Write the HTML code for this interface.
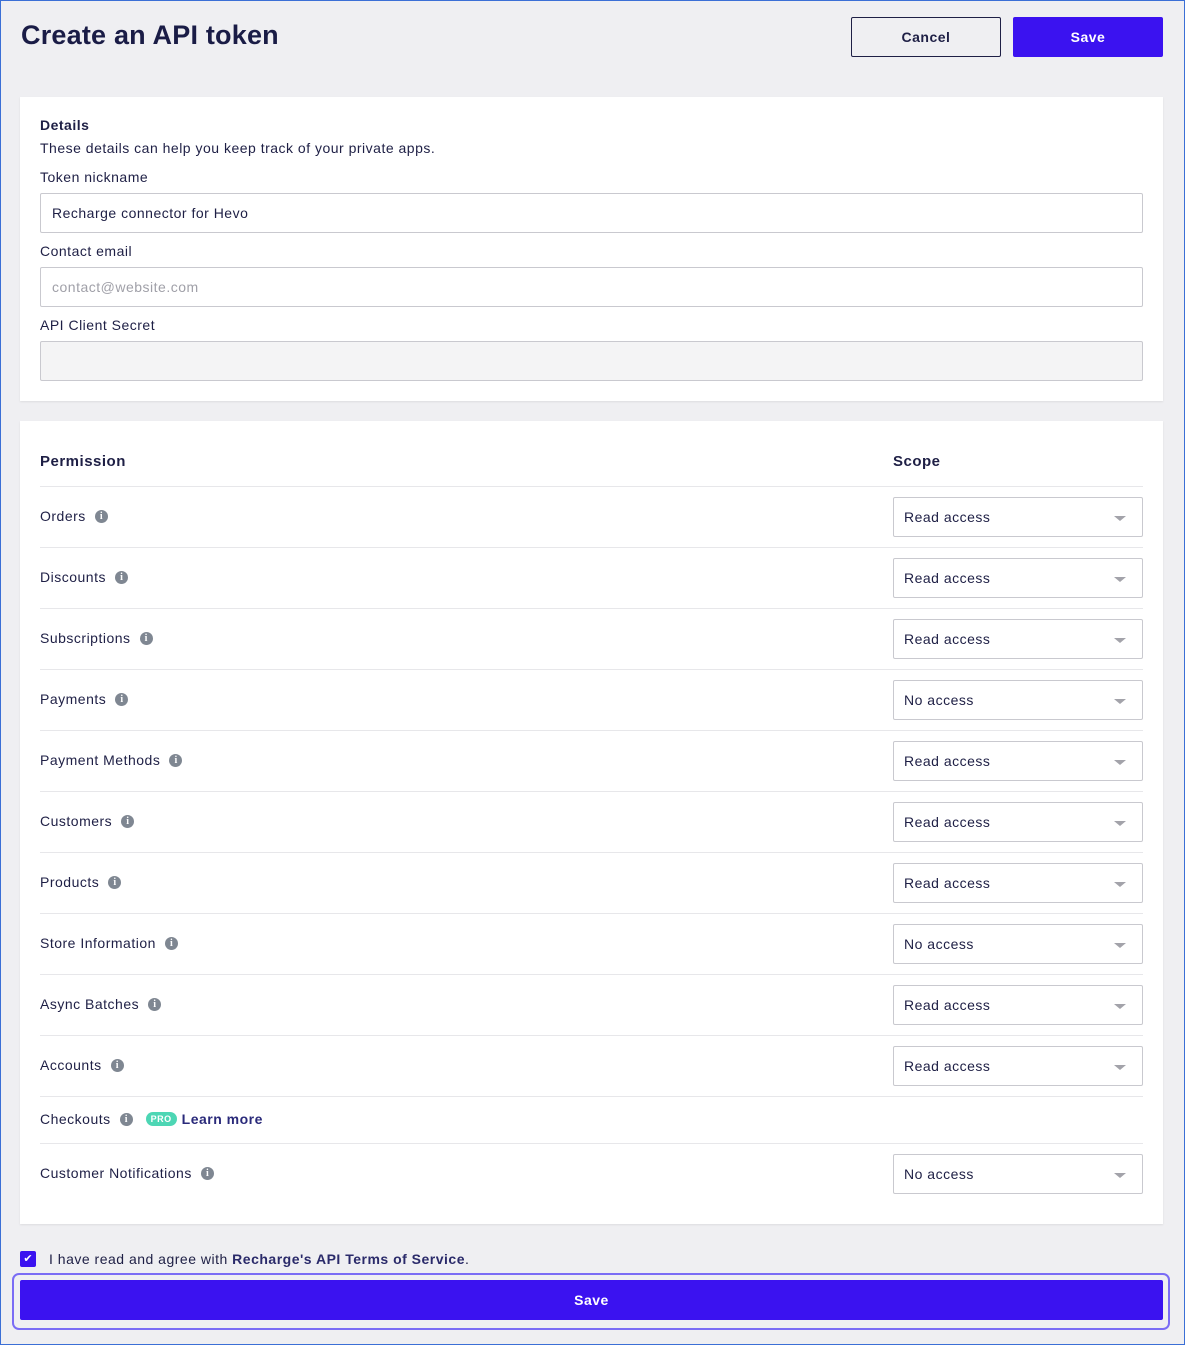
<!DOCTYPE html>
<html><head><meta charset="utf-8"><style>
*{box-sizing:border-box;margin:0;padding:0}
body{width:1185px;height:1345px;background:#efeff2;font-family:"Liberation Sans",sans-serif;color:#1e1f45;position:relative;overflow:hidden;font-size:14px;letter-spacing:0.5px}
.frame{position:absolute;left:0;top:0;width:1185px;height:1345px;border:1px solid #3b6fd6;pointer-events:none}
.abs{position:absolute}
h1{position:absolute;left:21px;top:20px;font-size:27px;font-weight:bold;color:#1a1c46;letter-spacing:0.2px}
.btn{position:absolute;top:17px;height:40px;font-weight:bold;font-size:14px;display:flex;align-items:center;justify-content:center;border-radius:2px}
.card{position:absolute;left:20px;width:1143px;background:#fff;box-shadow:0 1px 2px rgba(0,0,0,.08)}
.lbl{position:absolute;left:40px;font-size:14px;line-height:16px}
.inp{position:absolute;left:40px;width:1103px;height:40px;border:1px solid #c9c9cf;border-radius:2px;padding:0 11px;display:flex;align-items:center;font-size:14px}
.sep{position:absolute;left:40px;width:1103px;height:1px;background:#e7e7ea}
.sel{position:absolute;left:893px;width:250px;height:40px;border:1px solid #c9c9cf;border-radius:2px;padding:0 10px;display:flex;align-items:center}
.sel:after{content:"";position:absolute;right:16px;top:18px;border-left:6px solid transparent;border-right:6px solid transparent;border-top:5px solid #a3a3aa}
.row{position:absolute;left:40px;display:flex;align-items:center;height:20px}
.i{display:inline-block;width:13px;height:13px;border-radius:50%;background:#7f8792;color:#fff;font-size:10px;font-weight:bold;text-align:center;line-height:13px;margin-left:9px;font-family:"Liberation Serif",serif;letter-spacing:0}
</style></head><body>
<h1>Create an API token</h1>
<div class="btn" style="left:851px;width:150px;border:1px solid #1e1f45;color:#1e1f45">Cancel</div>
<div class="btn" style="left:1013px;width:150px;background:#3b12f0;color:#fff">Save</div>

<div class="card" style="top:97px;height:304px"></div>
<div class="lbl" style="top:117px;font-weight:bold">Details</div>
<div class="lbl" style="top:140px">These details can help you keep track of your private apps.</div>
<div class="lbl" style="top:169px">Token nickname</div>
<div class="inp" style="top:193px">Recharge connector for Hevo</div>
<div class="lbl" style="top:243px">Contact email</div>
<div class="inp" style="top:267px;color:#a0a0a8">contact@website.com</div>
<div class="lbl" style="top:317px">API Client Secret</div>
<div class="inp" style="top:341px;background:#f4f4f5"></div>

<div class="card" style="top:421px;height:803px"></div>
<div class="lbl" style="top:454px;font-weight:bold;font-size:15px">Permission</div>
<div class="abs" style="left:893px;top:454px;font-weight:bold;font-size:15px;line-height:16px">Scope</div>

<div class="sep" style="top:486px"></div>
<div class="row" style="top:506px">Orders<span class="i">i</span></div>
<div class="sel" style="top:497px">Read access</div>
<div class="sep" style="top:547px"></div>
<div class="row" style="top:567px">Discounts<span class="i">i</span></div>
<div class="sel" style="top:558px">Read access</div>
<div class="sep" style="top:608px"></div>
<div class="row" style="top:628px">Subscriptions<span class="i">i</span></div>
<div class="sel" style="top:619px">Read access</div>
<div class="sep" style="top:669px"></div>
<div class="row" style="top:689px">Payments<span class="i">i</span></div>
<div class="sel" style="top:680px">No access</div>
<div class="sep" style="top:730px"></div>
<div class="row" style="top:750px">Payment Methods<span class="i">i</span></div>
<div class="sel" style="top:741px">Read access</div>
<div class="sep" style="top:791px"></div>
<div class="row" style="top:811px">Customers<span class="i">i</span></div>
<div class="sel" style="top:802px">Read access</div>
<div class="sep" style="top:852px"></div>
<div class="row" style="top:872px">Products<span class="i">i</span></div>
<div class="sel" style="top:863px">Read access</div>
<div class="sep" style="top:913px"></div>
<div class="row" style="top:933px">Store Information<span class="i">i</span></div>
<div class="sel" style="top:924px">No access</div>
<div class="sep" style="top:974px"></div>
<div class="row" style="top:994px">Async Batches<span class="i">i</span></div>
<div class="sel" style="top:985px">Read access</div>
<div class="sep" style="top:1035px"></div>
<div class="row" style="top:1055px">Accounts<span class="i">i</span></div>
<div class="sel" style="top:1046px">Read access</div>
<div class="sep" style="top:1096px"></div>
<div class="row" style="top:1109px">Checkouts<span class="i">i</span><span style="margin-left:13px;background:#4dd6b4;color:#fff;font-size:9px;font-weight:bold;border-radius:8px;padding:2px 5px;letter-spacing:0.5px">PRO</span><span style="margin-left:5px;font-weight:bold;color:#2a2a7a">Learn more</span></div>
<div class="sep" style="top:1143px"></div>
<div class="row" style="top:1163px">Customer Notifications<span class="i">i</span></div>
<div class="sel" style="top:1154px">No access</div>

<div class="abs" style="left:20px;top:1251px;width:16px;height:16px;background:#3b12f0;border-radius:2px;color:#fff;font-size:11px;text-align:center;line-height:16px;letter-spacing:0">✔</div>
<div class="abs" style="left:49px;top:1251px;line-height:16px">I have read and agree with <b style="color:#2a2a6a">Recharge's API Terms of Service</b>.</div>
<div class="abs" style="left:12px;top:1273px;width:1158px;height:57px;border:2px solid #7a6cf5;border-radius:7px"></div>
<div class="abs" style="left:20px;top:1280px;width:1143px;height:40px;background:#3b12f0;border-radius:2px;color:#fff;font-weight:bold;display:flex;align-items:center;justify-content:center">Save</div>
<div class="frame"></div>
</body></html>
